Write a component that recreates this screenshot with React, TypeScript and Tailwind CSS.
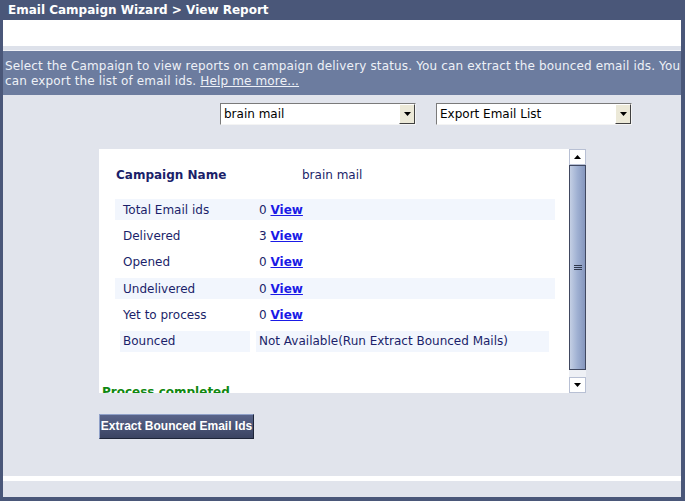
import React from "react";

const VERDANA = "font-['Tahoma','DejaVu_Sans','Verdana',sans-serif]";

type Row = { label: string; value: string; link?: boolean; shaded?: boolean };

const ROWS: Row[] = [
  { label: "Total Email ids", value: "0", link: true, shaded: true },
  { label: "Delivered", value: "3", link: true },
  { label: "Opened", value: "0", link: true },
  { label: "Undelivered", value: "0", link: true, shaded: true },
  { label: "Yet to process", value: "0", link: true },
];

function SelectBox({ value, width }: { value: string; width: string }) {
  return (
    <div
      className={`flex h-[22px] ${width} items-center border-t border-l border-t-[#7a7a7a] border-l-[#7a7a7a] border-b border-r border-b-[#f4f4f4] border-r-[#f4f4f4] bg-white`}
    >
      <span className="flex-1 pl-[3px] text-[12px] text-black">{value}</span>
      <div className="flex h-[20px] w-[16px] items-center justify-center border border-t-white border-l-white border-b-[#404040] border-r-[#404040] bg-[#ece9d8]">
        <svg width="7" height="4" viewBox="0 0 7 4">
          <path d="M0 0h7L3.5 4z" fill="#000" />
        </svg>
      </div>
    </div>
  );
}

function Scrollbar() {
  return (
    <div className="flex w-[17px] flex-col bg-[#eef0f5]">
      <div className="flex h-[16px] items-center justify-center border border-[#b8c0d4] bg-white">
        <svg width="7" height="4" viewBox="0 0 7 4">
          <path d="M0 4h7L3.5 0z" fill="#000" />
        </svg>
      </div>
      <div className="flex h-[205px] items-center justify-center border border-[#404860] bg-gradient-to-r from-[#c4cfe4] via-[#9fb0d2] to-[#8596bd]">
        <div className="flex flex-col gap-[1px]">
          <div className="h-[1px] w-[8px] bg-[#30384c]" />
          <div className="h-[1px] w-[8px] bg-[#30384c]" />
          <div className="h-[1px] w-[8px] bg-[#30384c]" />
        </div>
      </div>
      <div className="flex-1 bg-[#eef0f5]" />
      <div className="flex h-[16px] items-center justify-center border border-[#b8c0d4] bg-white">
        <svg width="7" height="4" viewBox="0 0 7 4">
          <path d="M0 0h7L3.5 4z" fill="#000" />
        </svg>
      </div>
    </div>
  );
}

export default function App() {
  return (
    <div
      className={`flex h-[501px] w-[685px] flex-col bg-[#4a5779] pb-[4px] pl-[3px] pr-[4px] ${VERDANA}`}
    >
      {/* title bar */}
      <div className="flex h-[20px] items-center pl-[5px] text-[12px] font-bold text-white">
        Email Campaign Wizard &gt; View Report
      </div>

      <div className="h-[26px] bg-white" />
      <div className="h-[4px] bg-[#dde1ea]" />
      <div className="h-[1px] bg-[#f0f2f7]" />

      {/* description */}
      <div className="h-[44px] bg-[#6c7c9f] pl-[2px] pt-[8px] text-[12px] leading-[15px] tracking-[0.15px] text-[#eef1f7]">
        Select the Campaign to view reports on campaign delivery status. You can extract the
        bounced email ids. You can export the list of email ids.{" "}
        <span className="underline">Help me more...</span>
      </div>

      {/* body */}
      <div className="flex flex-1 flex-col bg-[#e1e4ec]">
        <div className="flex gap-[20px] pl-[217px] pt-[8px]">
          <SelectBox value="brain mail" width="w-[196px]" />
          <SelectBox value="Export Email List" width="w-[196px]" />
        </div>

        <div className="ml-[96px] mt-[24px] flex h-[244px] w-[487px] bg-white">
          <div className="flex-1 overflow-hidden pl-[3px] pr-[14px]">
            <div className="flex h-[50px] items-center pl-[14px] pt-[2px] text-[12px] text-[#1b1f6a]">
              <span className="w-[186px] font-bold">Campaign Name</span>
              <span>brain mail</span>
            </div>
            <div className="flex flex-col gap-[5.4px] text-[12px] text-[#1b1f6a]">
              {ROWS.map((r) => (
                <div
                  key={r.label}
                  className={`ml-[13px] flex h-[21px] items-center ${r.shaded ? "bg-[#f2f6fd]" : ""}`}
                >
                  <span className="w-[144px] pl-[8px]">{r.label}</span>
                  <span>
                    {r.value}{" "}
                    {r.link && <span className="font-bold text-[#1a1ae6] underline">View</span>}
                  </span>
                </div>
              ))}
              <div className="ml-[13px] flex h-[21px] gap-[6px] pl-[5px]">
                <div className="flex w-[130px] items-center bg-[#f2f6fd] pl-[3px]">Bounced</div>
                <div className="flex w-[293px] items-center bg-[#f2f6fd] pl-[3px]">
                  Not Available(Run Extract Bounced Mails)
                </div>
              </div>
            </div>
            <div className="mt-[31px] text-[12px] font-bold text-[#118811]">Process completed</div>
          </div>
          <Scrollbar />
        </div>

        <div className="ml-[96px] mt-[20px]">
          <button className="h-[25px] w-[155px] border border-t-[#8fa0c8] border-l-[#8fa0c8] border-b-[#1e2538] border-r-[#1e2538] bg-gradient-to-b from-[#59648a] to-[#3b4462] font-['Liberation_Sans',Arial,sans-serif] text-[12px] font-bold text-white">
            Extract Bounced Email Ids
          </button>
        </div>

        <div className="flex-1" />
        <div className="h-[5px] bg-white" />
        <div className="h-[16px] bg-[#e1e4ec]" />
      </div>
    </div>
  );
}
